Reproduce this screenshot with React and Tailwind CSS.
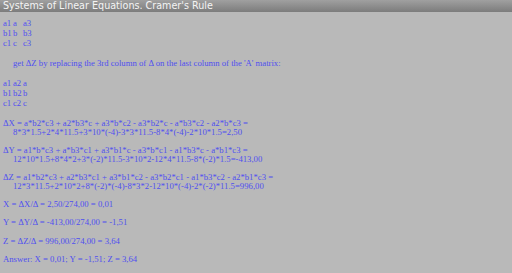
export default function App() {
  const serif = { fontFamily: '"Liberation Serif", "DejaVu Serif", serif' };
  const M1 = [["a1", "a", "a3"], ["b1", "b", "b3"], ["c1", "c", "c3"]];
  const M2 = [["a1", "a2", "a"], ["b1", "b2", "b"], ["c1", "c2", "c"]];
  const Matrix = ({ rows }) => (
    <div className="flex flex-col">
      {rows.map((r, i) => (
        <div key={i} className="flex h-[10px] items-center">
          {r.map((c, j) => (
            <span key={j} className="w-[10px] whitespace-nowrap">{c}</span>
          ))}
        </div>
      ))}
    </div>
  );
  return (
    <div className="w-[512px] h-[273px] bg-[#b9b9b9] overflow-hidden flex flex-col">
      <div
        className="h-[12px] shrink-0 bg-gradient-to-b from-[#a0a0a0] to-[#7c7c7c] flex items-center px-[3px] text-[9.6px] text-[#f4f4f4]"
        style={{ fontFamily: '"DejaVu Sans", "Open Sans", sans-serif' }}
      >
        Systems of Linear Equations. Cramer's Rule
      </div>
      <div className="flex flex-col px-[3px] pt-[6px] text-[8.7px] text-[#4f4ff0] leading-[10px]" style={serif}>
        <Matrix rows={M1} />
        <div className="mt-[10px] h-[10px] pl-[10px] whitespace-nowrap">
          get ΔZ by replacing the 3rd column of Δ on the last column of the 'A' matrix:
        </div>
        <div className="mt-[10px]">
          <Matrix rows={M2} />
        </div>
        <div className="mt-[10px] whitespace-nowrap">
          <div className="h-[9px]">ΔX = a*b2*c3 + a2*b3*c + a3*b*c2 - a3*b2*c - a*b3*c2 - a2*b*c3 =</div>
          <div className="h-[10px] pl-[10px]">8*3*1.5+2*4*11.5+3*10*(-4)-3*3*11.5-8*4*(-4)-2*10*1.5=2,50</div>
        </div>
        <div className="mt-[8px] whitespace-nowrap">
          <div className="h-[9px]">ΔY = a1*b*c3 + a*b3*c1 + a3*b1*c - a3*b*c1 - a1*b3*c - a*b1*c3 =</div>
          <div className="h-[10px] pl-[10px]">12*10*1.5+8*4*2+3*(-2)*11.5-3*10*2-12*4*11.5-8*(-2)*1.5=-413,00</div>
        </div>
        <div className="mt-[8px] whitespace-nowrap">
          <div className="h-[9px]">ΔZ = a1*b2*c3 + a2*b3*c1 + a3*b1*c2 - a3*b2*c1 - a1*b3*c2 - a2*b1*c3 =</div>
          <div className="h-[10px] pl-[10px]">12*3*11.5+2*10*2+8*(-2)*(-4)-8*3*2-12*10*(-4)-2*(-2)*11.5=996,00</div>
        </div>
        <div className="mt-[8px] h-[10px] whitespace-nowrap">X = ΔX/Δ = 2,50/274,00 = 0,01</div>
        <div className="mt-[8px] h-[10px] whitespace-nowrap">Y = ΔY/Δ = -413,00/274,00 = -1,51</div>
        <div className="mt-[9px] h-[10px] whitespace-nowrap">Z = ΔZ/Δ = 996,00/274,00 = 3,64</div>
        <div className="mt-[8px] h-[10px] whitespace-nowrap">Answer: X = 0,01; Y = -1,51; Z = 3,64</div>
      </div>
    </div>
  );
}
